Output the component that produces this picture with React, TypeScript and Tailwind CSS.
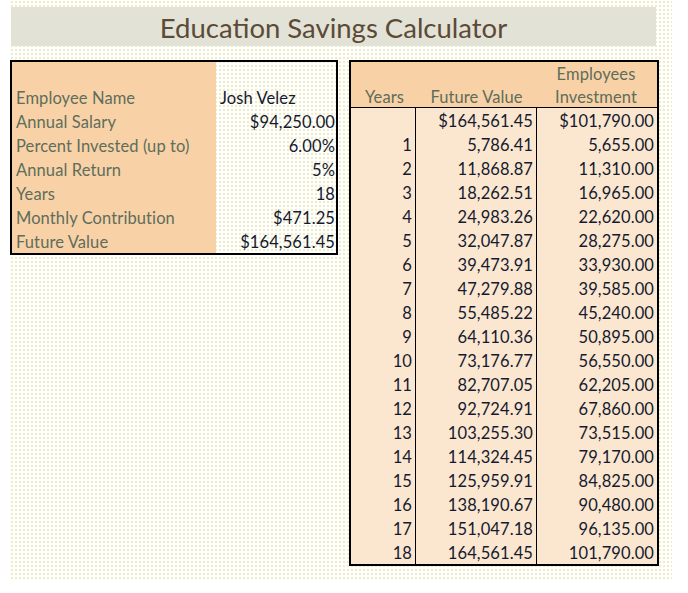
import React from "react";

const font = { fontFamily: "Lato, 'Open Sans', sans-serif" };

const left: [string, string][] = [
  ["Employee Name", "Josh Velez"],
  ["Annual Salary", "$94,250.00"],
  ["Percent Invested (up to)", "6.00%"],
  ["Annual Return", "5%"],
  ["Years", "18"],
  ["Monthly Contribution", "$471.25"],
  ["Future Value", "$164,561.45"],
];

const rows: [string, string, string][] = [
  ["", "$164,561.45", "$101,790.00"],
  ["1", "5,786.41", "5,655.00"],
  ["2", "11,868.87", "11,310.00"],
  ["3", "18,262.51", "16,965.00"],
  ["4", "24,983.26", "22,620.00"],
  ["5", "32,047.87", "28,275.00"],
  ["6", "39,473.91", "33,930.00"],
  ["7", "47,279.88", "39,585.00"],
  ["8", "55,485.22", "45,240.00"],
  ["9", "64,110.36", "50,895.00"],
  ["10", "73,176.77", "56,550.00"],
  ["11", "82,707.05", "62,205.00"],
  ["12", "92,724.91", "67,860.00"],
  ["13", "103,255.30", "73,515.00"],
  ["14", "114,324.45", "79,170.00"],
  ["15", "125,959.91", "84,825.00"],
  ["16", "138,190.67", "90,480.00"],
  ["17", "151,047.18", "96,135.00"],
  ["18", "164,561.45", "101,790.00"],
];

export default function App() {
  return (
    <div className="w-[688px] h-[593px] bg-white pl-[10px]" style={font}>
      <div className="w-[662px] h-[580px] bg-white bg-[radial-gradient(#efecc2_0.8px,transparent_1px)] bg-[length:4px_4px] pt-[7px] pl-[1px]">
        <div className="w-[645px] h-[39px] bg-[#e2e2d6] flex items-center justify-center pt-[3px] text-[27.5px] text-[#5c4a36] leading-none">
          Education Savings Calculator
        </div>
        <div className="flex items-start mt-[14px] gap-[11px] -ml-[1px] text-[16.5px] leading-[24px] tracking-[0.1px]">
          <div className="w-[328px] border-2 border-black flex">
            <div className="w-[204px] bg-[#f8d2a6] text-[#5e6d5c] pl-[4px]">
              <div className="h-[23px]" />
              {left.map(([l]) => (
                <div key={l} className="h-[24px] pt-[1px]">{l}</div>
              ))}
            </div>
            <div className="flex-1 text-[#141a30] pr-[1px]">
              <div className="h-[23px]" />
              {left.map(([l, v], i) => (
                <div
                  key={l}
                  className={`h-[24px] pt-[1px] ${i === 0 ? "text-left pl-[4px]" : "text-right"}`}
                >
                  {v}
                </div>
              ))}
            </div>
          </div>
          <div className="w-[310px] border-2 border-black">
            <div className="bg-[#f8d2a6] text-[#5e6d5c] h-[46px] flex flex-col border-b border-black leading-[23px]">
              <div className="h-[23px] flex">
                <div className="w-[65px]" />
                <div className="w-[121px]" />
                <div className="flex-1 text-center pr-[2px] pt-[1px]">Employees</div>
              </div>
              <div className="h-[23px] flex">
                <div className="w-[65px] text-center pl-[2px] pt-[1px]">Years</div>
                <div className="w-[121px] text-center pt-[1px]">Future Value</div>
                <div className="flex-1 text-center pr-[2px] pt-[1px]">Investment</div>
              </div>
            </div>
            <div className="bg-[#fbe6cf] text-[#141a30]">
              {rows.map(([y, f, e], i) => (
                <div key={i} className="flex h-[24px]">
                  <div className="w-[65px] h-[24px] text-right pr-[3px] pt-[1px] border-r border-black">{y}</div>
                  <div className="w-[121px] h-[24px] text-right pr-[3px] pt-[1px] border-r border-black">{f}</div>
                  <div className="flex-1 h-[24px] text-right pr-[3px] pt-[1px]">{e}</div>
                </div>
              ))}
            </div>
          </div>
        </div>
      </div>
    </div>
  );
}
